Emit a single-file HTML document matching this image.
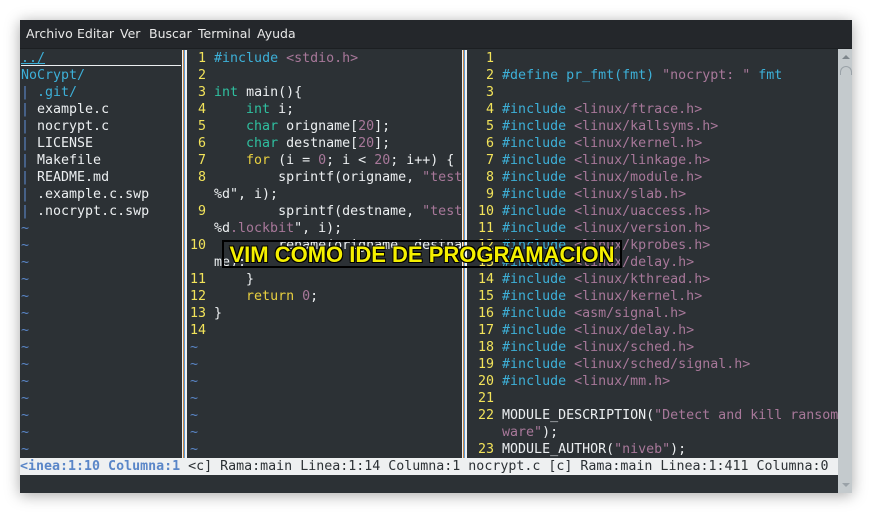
<!DOCTYPE html>
<html><head><meta charset="utf-8"><style>
body{margin:0;width:872px;height:513px;background:#fff;position:relative;overflow:hidden;font-family:"DejaVu Sans Mono","Liberation Mono",monospace;}
.win{position:absolute;left:20px;top:20px;width:832px;height:473px;background:#2c3135;box-shadow:0 2px 14px rgba(0,0,0,.35);}
.menu{position:absolute;left:0;top:0;width:832px;height:28px;background:#24272b;border-bottom:1px solid #1c1f22;font-family:"DejaVu Sans","Liberation Sans",sans-serif;font-size:12.5px;color:#e8e8e8;}
.menu span{position:absolute;top:6px;}
.pane{position:absolute;top:30px;font-size:13.3px;line-height:17px;color:#eceff1;white-space:pre;}
.sep{position:absolute;top:30px;height:408px;width:5px;background:linear-gradient(to right,#f0f0f0 0,#f0f0f0 1px,#c88848 1px,#c88848 2px,#5a9ad8 2px,#5a9ad8 3px,#f0f0f0 3px,#f0f0f0 5px);}
.n{color:#f2e35a}.c{color:#3db0d8}.s{color:#a8789a}.k{color:#2fc0a0}.y{color:#e8d040}.t{color:#5a86c8}.b{color:#3db0d8}
.status{position:absolute;left:0;top:438px;width:818px;height:17px;background:#eef0f1;font-size:13.3px;line-height:17px;color:#2c3135;white-space:pre;}
.scroll{position:absolute;left:818px;top:29px;width:14px;height:444px;background:#c4cacd;}
.banner{position:absolute;left:202px;top:220px;width:396px;height:24px;border:2px solid #000;font-family:"Liberation Sans",sans-serif;font-weight:bold;font-size:22px;line-height:25px;color:#f5f000;text-shadow:-1px -1px 0 #000,1px -1px 0 #000,-1px 1px 0 #000,1px 1px 0 #000;text-align:center;white-space:nowrap;overflow:visible;}
</style></head><body>
<div class="win">
<div class="menu"><span style="left:6px">Archivo</span><span style="left:57px">Editar</span><span style="left:100px">Ver</span><span style="left:129px">Buscar</span><span style="left:178px">Terminal</span><span style="left:237px">Ayuda</span></div>
<div class="pane" style="left:1px;width:160px"><span class="b" style="text-decoration:underline">../</span><span style="position:absolute;left:0;top:15px;width:160px;height:1px;background:#eceff1"></span>
<span class="b">NoCrypt/</span>
<span class="t">|</span> <span class="b">.git/</span>
<span class="t">|</span> example.c
<span class="t">|</span> nocrypt.c
<span class="t">|</span> LICENSE
<span class="t">|</span> Makefile
<span class="t">|</span> README.md
<span class="t">|</span> .example.c.swp
<span class="t">|</span> .nocrypt.c.swp
<span class="t">~
~
~
~
~
~
~
~
~
~
~
~
~
~
~</span></div>
<div class="sep" style="left:162px"></div>
<div class="pane" style="left:170px;width:272px;overflow:hidden"><span class="n"> 1</span> <span class="c">#include</span> <span class="s">&lt;stdio.h&gt;</span>
<span class="n"> 2</span>
<span class="n"> 3</span> <span class="k">int</span> main(){
<span class="n"> 4</span>     <span class="k">int</span> i;
<span class="n"> 5</span>     <span class="k">char</span> origname[<span class="s">20</span>];
<span class="n"> 6</span>     <span class="k">char</span> destname[<span class="s">20</span>];
<span class="n"> 7</span>     <span class="y">for</span> (i = <span class="s">0</span>; i &lt; <span class="s">20</span>; i++) {
<span class="n"> 8</span>         sprintf(origname, <span class="s">"test</span>
   %d", i);
<span class="n"> 9</span>         sprintf(destname, <span class="s">"test</span>
   %d<span class="s">.lockbit</span>", i);
<span class="n">10</span>         rename(origname, destna
   me);
<span class="n">11</span>     }
<span class="n">12</span>     <span class="y">return</span> <span class="s">0</span>;
<span class="n">13</span> }
<span class="n">14</span>
<span class="t">~
~
~
~
~
~
~</span></div>
<div class="sep" style="left:442px"></div>
<div class="pane" style="left:450px;width:368px;overflow:hidden"><span class="n">  1</span>
<span class="n">  2</span> <span class="c">#define pr_fmt(fmt)</span> <span class="s">"nocrypt: "</span> <span class="c">fmt</span>
<span class="n">  3</span>
<span class="n">  4</span> <span class="c">#include</span> <span class="s">&lt;linux/ftrace.h&gt;</span>
<span class="n">  5</span> <span class="c">#include</span> <span class="s">&lt;linux/kallsyms.h&gt;</span>
<span class="n">  6</span> <span class="c">#include</span> <span class="s">&lt;linux/kernel.h&gt;</span>
<span class="n">  7</span> <span class="c">#include</span> <span class="s">&lt;linux/linkage.h&gt;</span>
<span class="n">  8</span> <span class="c">#include</span> <span class="s">&lt;linux/module.h&gt;</span>
<span class="n">  9</span> <span class="c">#include</span> <span class="s">&lt;linux/slab.h&gt;</span>
<span class="n"> 10</span> <span class="c">#include</span> <span class="s">&lt;linux/uaccess.h&gt;</span>
<span class="n"> 11</span> <span class="c">#include</span> <span class="s">&lt;linux/version.h&gt;</span>
<span class="n"> 12</span> <span class="c">#include</span> <span class="s">&lt;linux/kprobes.h&gt;</span>
<span class="n"> 13</span> <span class="c">#include</span> <span class="s">&lt;linux/delay.h&gt;</span>
<span class="n"> 14</span> <span class="c">#include</span> <span class="s">&lt;linux/kthread.h&gt;</span>
<span class="n"> 15</span> <span class="c">#include</span> <span class="s">&lt;linux/kernel.h&gt;</span>
<span class="n"> 16</span> <span class="c">#include</span> <span class="s">&lt;asm/signal.h&gt;</span>
<span class="n"> 17</span> <span class="c">#include</span> <span class="s">&lt;linux/delay.h&gt;</span>
<span class="n"> 18</span> <span class="c">#include</span> <span class="s">&lt;linux/sched.h&gt;</span>
<span class="n"> 19</span> <span class="c">#include</span> <span class="s">&lt;linux/sched/signal.h&gt;</span>
<span class="n"> 20</span> <span class="c">#include</span> <span class="s">&lt;linux/mm.h&gt;</span>
<span class="n"> 21</span>
<span class="n"> 22</span> MODULE_DESCRIPTION(<span class="s">"Detect and kill ransom</span>
<span class="s">    ware"</span>);
<span class="n"> 23</span> MODULE_AUTHOR(<span class="s">"niveb"</span>);</div>
<div class="status"><span style="color:#5a86c8;font-weight:bold">&lt;inea:1:10 Columna:1</span> &lt;c] Rama:main Linea:1:14 Columna:1 nocrypt.c [c] Rama:main Linea:1:411 Columna:0</div>
<div class="scroll"><div style="position:absolute;left:4px;top:6px;width:0;height:0;border-left:4px solid transparent;border-right:4px solid transparent;border-bottom:4px solid #7e868c"></div><div style="position:absolute;left:2px;top:17px;width:10px;height:8px;border:1px solid #9aa2a8;border-bottom:none;border-radius:6px 6px 0 0"></div><div style="position:absolute;left:4px;bottom:6px;width:0;height:0;border-left:4px solid transparent;border-right:4px solid transparent;border-top:4px solid #9aa2a8"></div></div>
<div class="banner">VIM COMO IDE DE PROGRAMACION</div>
</div>
</body></html>
